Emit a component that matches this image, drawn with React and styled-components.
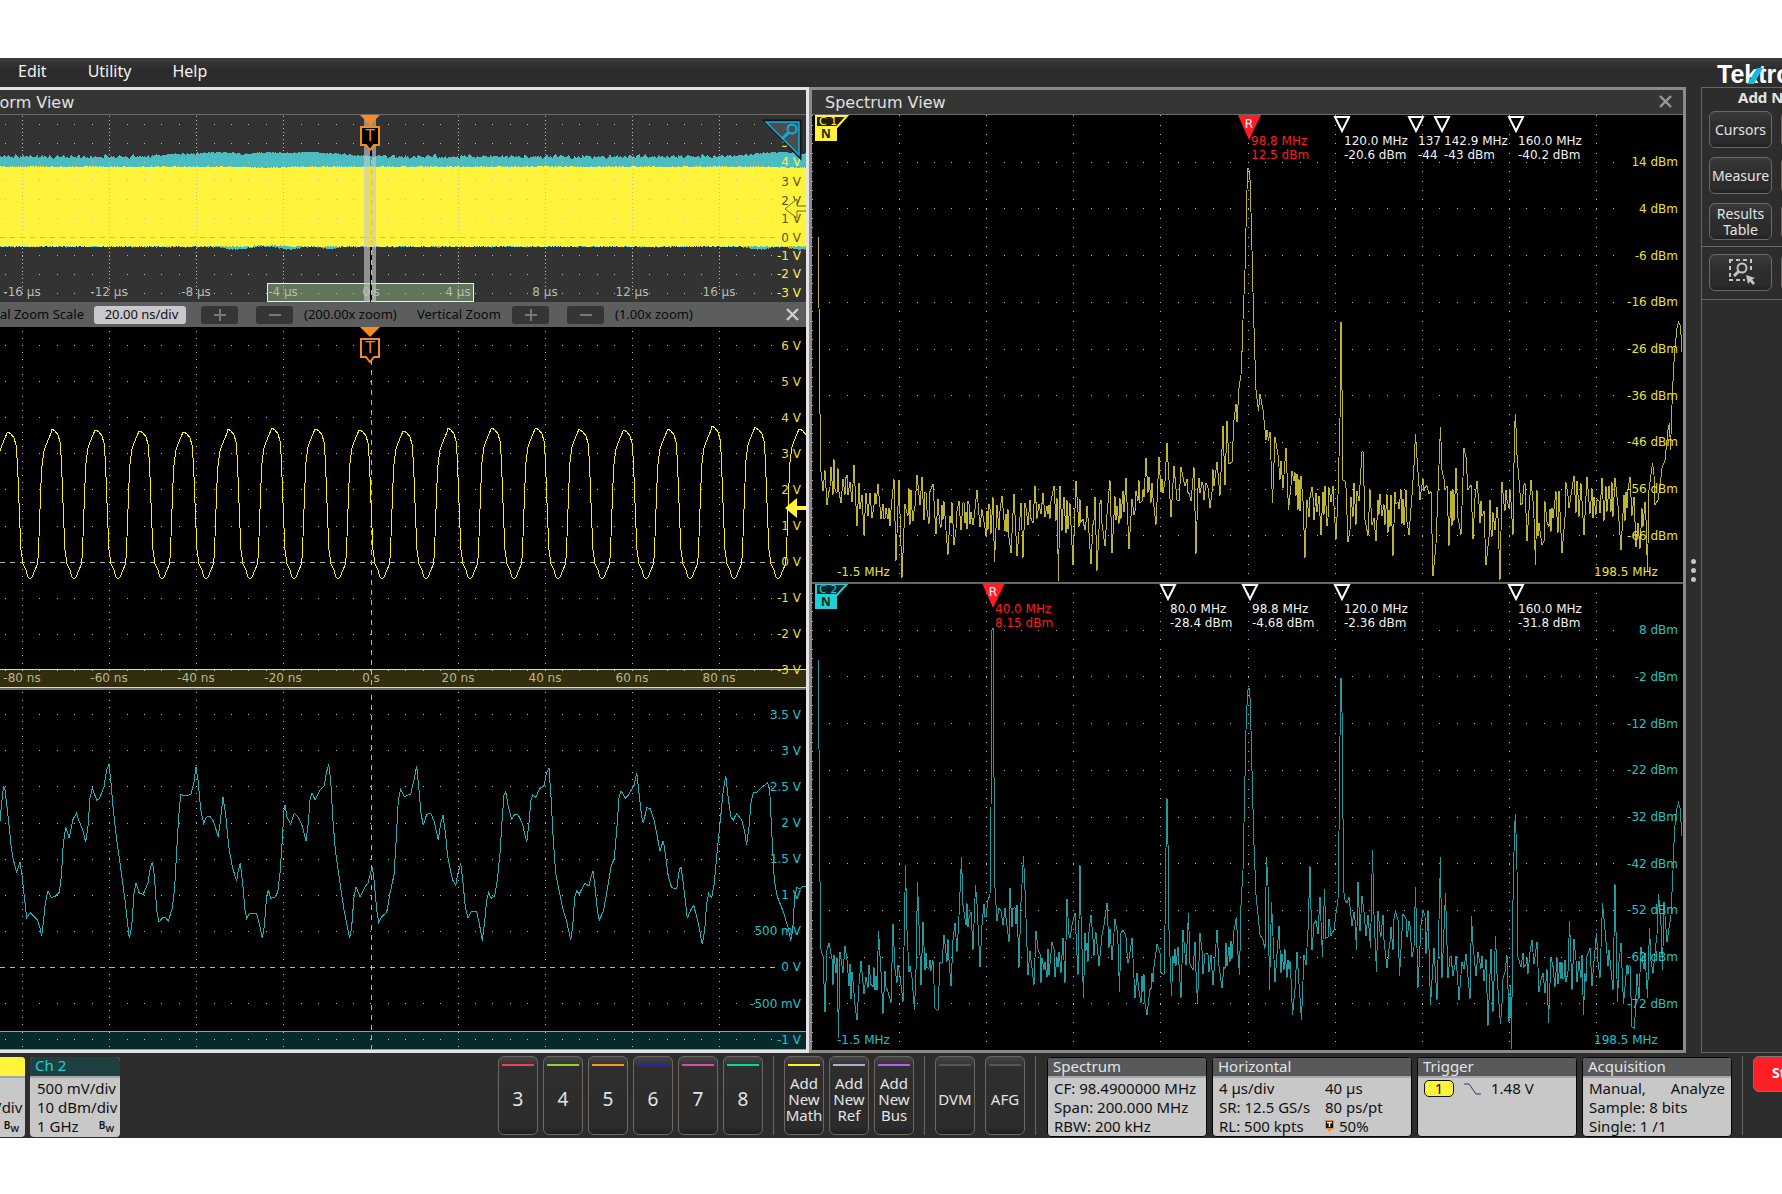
import React, { useState } from 'react';
import styled, { createGlobalStyle } from 'styled-components';

const YELLOW = '#fff43b';
const CYAN = '#22cfd6';
const ORANGE = '#f78b1f';

const GlobalStyle = createGlobalStyle`
    * { box-sizing: border-box; }
    body {
        margin: 0;
        background: #fff;
        font-family: "Noto Sans", "Open Sans", sans-serif;
        overflow-x: hidden;
    }
    button { font-family: inherit; padding: 0; cursor: pointer; }
`;

const Page = styled.div`
    padding: 58px 0 56px;
    overflow: hidden;
`;

const Scope = styled.main`
    background: #2d2d2d;
    color: #e4e4e4;
`;

const MenuBar = styled.header`
    height: 29px;
    display: flex;
    align-items: flex-start;
    justify-content: space-between;
    background: linear-gradient(#3c3c3c, #2c2c2c 40%);
`;

const Menus = styled.nav`
    display: flex;
    gap: 41px;
    padding: 1px 0 0 18px;
`;

const MenuLink = styled.a`
    color: #f2f2f2;
    font-size: 16px;
    line-height: 24px;
    text-decoration: none;
`;

const Brand = styled.svg`
    width: 65px;
    height: 28px;
    display: block;
`;

const Views = styled.div`
    display: grid;
    grid-template-columns: 809fr 877fr 96px;
`;

const View = styled.section`
    min-width: 0;
    border: 3px solid ${p => p.$edge};
    border-left-width: ${p => (p.$flush ? 0 : 3)}px;
    background: #000;
`;

const ViewTitle = styled.div`
    height: 25px;
    display: flex;
    align-items: center;
    justify-content: space-between;
    padding: 2px 8px 0 10px;
    overflow: hidden;
    background: #353533;
    border-bottom: 1px solid #6b6b6b;
`;

const Title = styled.h2`
    margin: 0;
    margin-left: ${p => (p.$cut ? -60 : 3)}px;
    color: #e0e0e0;
    font: 16px/24px "DejaVu Sans", sans-serif;
    white-space: nowrap;
`;

const CloseButton = styled.button`
    width: 20px;
    height: 20px;
    border: 0;
    background: none;
`;

const Plot = styled.svg`
    display: block;
    width: 100%;
    height: auto;
    background: ${p => p.$back || '#000'};
    font: 12px "DejaVu Sans", sans-serif;
`;

const Divider = styled.div`
    height: 2px;
    background: #666;
`;

const ZoomBar = styled.div`
    height: 25px;
    display: flex;
    align-items: center;
    overflow: hidden;
    background: #5c5e5d;
    color: #0a0a0a;
    font-size: 13px;
    line-height: 18px;
    white-space: nowrap;
`;

const ZoomLabel = styled.label`
    width: 84px;
    display: flex;
    justify-content: flex-end;
    padding-bottom: 2px;
`;

const ZoomInput = styled.input`
    width: 92px;
    height: 18px;
    margin: 0 15px 0 10px;
    padding: 0 0 2px 3px;
    border: 0;
    border-radius: 3px;
    background: #c9c9cc;
    color: #111;
    font: 13px/16px "Noto Sans", sans-serif;
    text-align: center;
`;

const ZoomStep = styled.button`
    width: 37px;
    height: 18px;
    margin-right: 18px;
    display: flex;
    align-items: center;
    justify-content: center;
    border: 0;
    border-radius: 3px;
    background: #353535;
`;

const ZoomFactor = styled.span`
    width: 113px;
    margin-left: -7px;
    padding-bottom: 2px;
`;

const ZoomCaption = styled.span`
    width: 95px;
    padding-bottom: 2px;
`;

const ZoomClose = styled(CloseButton)`
    margin: 2px 4px 0 auto;
`;

const SideColumn = styled.aside`
    display: grid;
    grid-template-columns: 15px 81px;
`;

const DragHandle = styled.div`
    display: flex;
    flex-direction: column;
    align-items: center;
    justify-content: center;
    gap: 4px;
`;

const HandleDot = styled.span`
    width: 5px;
    height: 5px;
    border-radius: 50%;
    background: #c4c4c4;
`;

const SidePanel = styled.div`
    overflow: hidden;
    border: 1px solid #6d6763;
    border-right: 0;
`;

const SideTitle = styled.h3`
    width: 150px;
    margin: 0;
    padding: 0 0 5px 36px;
    font-size: 15px;
    line-height: 18px;
    white-space: nowrap;
`;

const SideGrid = styled.div`
    display: grid;
    grid-template-columns: 63px 63px;
    gap: 9px;
    width: 142px;
    padding: ${p => (p.$tools ? '7px 0 8px 7px' : '0 0 6px 7px')};
    border-bottom: 1px solid #6d6763;
`;

const SideButton = styled.button`
    height: 37px;
    border: 1px solid #6e6762;
    border-radius: 6px;
    background: linear-gradient(#3a3a3a, #2e2e2e 40%, #2b2b2b 85%, #202020);
    color: #e4e4e4;
    font-size: 14px;
    line-height: 16px;
`;

const BottomBar = styled.footer`
    height: 85px;
    display: flex;
    align-items: flex-start;
    justify-content: space-between;
    overflow: hidden;
    padding-top: 3px;
`;

const Group = styled.div`
    display: flex;
    gap: ${p => p.$gap || 5}px;
`;

const ToolGroup = styled(Group)`
    margin-left: auto;
`;

const Separator = styled.span`
    width: 1px;
    height: 79px;
    flex: none;
    margin: 0 ${p => p.$after || 10}px 0 10px;
    background: #6d6763;
`;

const SlotButton = styled.button`
    position: relative;
    width: 40px;
    height: 79px;
    flex: none;
    padding-top: 6px;
    border: 1px solid #6e6762;
    border-radius: 6px;
    background: linear-gradient(#444, #2e2e2e 14%, #2c2c2c 90%, #1f1f1f);
    color: #e4e4e4;
    font-size: ${p => (p.$digit ? 19 : 15)}px;
    line-height: 16px;
    text-align: center;

    &::before {
        content: "";
        position: absolute;
        top: 7px;
        left: 3px;
        right: 3px;
        height: 2px;
        background: ${p => p.$color};
    }
`;

const ButtonText = styled.span`
    display: block;
    margin: 0 -4px;
`;

const Badge = styled.section`
    width: ${p => p.$width}px;
    height: 80px;
    flex: none;
    margin-left: ${p => (p.$cut ? -65 : 0)}px;
    margin-top: 1px;
    overflow: hidden;
    border: ${p => (p.$framed ? '1px solid #050505' : '0')};
    border-radius: 4px;
    background: #c8c8c8;
    color: #111;
    font-size: 15px;
    line-height: 19px;
    white-space: nowrap;
`;

const BadgeTitle = styled.h3`
    height: ${p => (p.$tall ? 21 : 20)}px;
    margin: 0;
    padding-left: 5px;
    border-bottom: 2px solid #a6a6a8;
    background: ${p => p.$back || '#58595b'};
    color: ${p => p.$color || '#e4e4e4'};
    font-size: 15px;
    font-weight: 400;
    line-height: 16px;
`;

const BadgeBody = styled.div`
    padding: 1px 6px 0 ${p => p.$pad || 6}px;
`;

const BadgeRow = styled.div`
    display: flex;
    align-items: center;
    justify-content: ${p => (p.$spread ? 'space-between' : 'flex-start')};
`;

const HorizontalGrid = styled.div`
    display: grid;
    grid-template-columns: 106px 1fr;
`;

const Bandwidth = styled.span`
    font-size: 10px;
    font-weight: 600;
    line-height: 12px;
    padding-bottom: 4px;
`;

const SubW = styled.sub`
    font-size: 9px;
    line-height: 0;
`;

const SourceTag = styled.span`
    width: 30px;
    height: 17px;
    margin-right: 10px;
    border: 1px solid #111;
    border-radius: 5px;
    background: ${YELLOW};
    line-height: 15px;
    text-align: center;
`;

const SlopeIcon = styled.svg`
    width: 17px;
    height: 12px;
    margin-right: 10px;
`;

const StopButton = styled.button`
    width: 90px;
    height: 36px;
    flex: none;
    margin-right: -61px;
    padding: 0 0 4px 18px;
    border: 1px solid #777;
    border-radius: 6px;
    background: #ff2026;
    color: #fff;
    font-size: 14px;
    font-weight: 700;
    text-align: left;
`;

/* ---------- trace data ---------- */

// small repeatable generator so the noise floor is the same on every paint
function makeRandom(seed) {
    let s = seed;
    return () => {
        s = (s * 1664525 + 1013904223) % 4294967296;
        return s / 4294967296;
    };
}

const toPath = pts => 'M' + pts.map(p => p[0].toFixed(1) + ' ' + p[1].toFixed(1)).join('L');

// floor: [x, top, bottom] envelope, peaks: [x, y] fixed samples
function spectrumPath(floor, peaks, seed) {
    const rnd = makeRandom(seed);
    const pts = peaks.slice();
    let up = true;
    let k = 0;
    for (let x = floor[0][0]; x < floor[floor.length - 1][0]; x += rnd() < 0.6 ? 1 : 2) {
        while (floor[k + 1][0] < x) k++;
        const [x0, t0, b0] = floor[k];
        const [x1, t1, b1] = floor[k + 1];
        const f = (x - x0) / (x1 - x0);
        const top = t0 + (t1 - t0) * f;
        const bottom = b0 + (b1 - b0) * f;
        const mid = (top + bottom) / 2;
        const reach = (0.1 + rnd() * 0.95) * (bottom - top) / 2;
        up = rnd() < 0.75 ? !up : up;
        const y = up ? mid - reach : mid + reach;
        if (!peaks.some(p => Math.abs(p[0] - x) < 1.2)) pts.push([x, y]);
    }
    return toPath(pts.sort((a, b) => a[0] - b[0]));
}

const floor1 = [
    [821, 465, 490], [830, 458, 495], [840, 463, 500], [850, 475, 500], [860, 480, 520],
    [870, 488, 518], [880, 500, 528], [890, 500, 530], [900, 485, 525], [915, 492, 525],
    [930, 492, 525], [945, 498, 530], [960, 500, 530], [975, 498, 528], [990, 505, 538],
    [1010, 505, 540], [1025, 494, 530], [1040, 494, 522], [1055, 494, 530], [1070, 500, 535],
    [1085, 498, 530], [1100, 490, 530], [1115, 495, 525], [1130, 488, 520], [1145, 476, 505],
    [1160, 470, 500], [1175, 475, 500], [1190, 478, 505], [1205, 474, 500], [1218, 462, 490],
    [1290, 450, 485], [1300, 475, 515], [1310, 485, 525], [1325, 480, 530], [1336, 478, 510],
    [1350, 482, 530], [1370, 488, 540], [1380, 480, 525], [1390, 485, 545], [1400, 485, 525],
    [1412, 480, 525], [1422, 470, 490], [1431, 475, 495], [1447, 478, 492], [1453, 490, 540],
    [1462, 465, 510], [1470, 480, 520], [1480, 490, 535], [1490, 495, 545], [1505, 490, 520],
    [1518, 482, 500], [1530, 485, 540], [1545, 490, 545], [1555, 490, 535], [1570, 480, 518],
    [1580, 480, 528], [1590, 485, 515], [1605, 488, 528], [1615, 480, 525], [1630, 480, 520],
    [1640, 492, 545], [1648, 475, 530], [1658, 470, 500], [1664, 455, 480],
];
const peaks1 = [
    [818, 236], [818.5, 255], [819.5, 360], [820.5, 467], [827, 505], [841, 503], [854, 465],
    [857, 526], [864, 535], [878, 484], [894, 479], [896, 561], [899, 480], [902, 578],
    [917, 475], [922, 477], [933, 484], [936, 534], [948, 555], [954, 545], [977, 490],
    [993, 497], [994.5, 562], [1002, 496], [1011, 553], [1014, 494], [1017, 556], [1023, 558],
    [1035, 486], [1054, 486], [1058.5, 581], [1060, 486], [1073, 565], [1076, 481], [1091, 564],
    [1097, 571], [1105, 546], [1110, 480], [1112, 553], [1126, 478], [1129, 549], [1146, 458],
    [1156, 525], [1159, 457], [1167, 443], [1171, 517], [1174, 466], [1181, 467], [1194, 467],
    [1196, 554], [1210, 508], [1217, 462], [1220, 496], [1223, 426], [1225, 485], [1227, 421],
    [1229, 464], [1232, 462], [1234, 420], [1236, 404], [1237, 422], [1239, 388], [1241, 375],
    [1242, 352], [1243, 320], [1245, 270], [1246, 228], [1247, 190], [1248, 168], [1249, 170],
    [1250, 180], [1251, 212], [1252, 250], [1253, 292], [1254.5, 345], [1256, 390], [1258.5, 411],
    [1260, 394], [1263, 410], [1266, 440], [1267, 430], [1268.5, 441], [1270, 432], [1272.5, 503],
    [1275, 437], [1278, 455], [1283, 488], [1286, 448], [1288.5, 510], [1305, 558], [1321, 535],
    [1336, 540], [1338, 495], [1340, 419], [1341, 322], [1342, 390], [1343, 480], [1348, 542],
    [1362, 452], [1363, 451], [1365, 520], [1376, 541], [1393, 556], [1409, 535], [1412, 495],
    [1414, 465], [1415.5, 434], [1417, 458], [1420, 500], [1433, 576], [1436, 544], [1439, 465],
    [1440.5, 427], [1442, 470], [1449, 546], [1456, 468], [1461, 535], [1464, 448], [1466, 457],
    [1468, 490], [1473, 539], [1477, 481], [1486, 565], [1500, 580], [1502, 482], [1513, 535],
    [1514.5, 428], [1515.5, 414], [1517, 455], [1519, 480], [1527, 541], [1531, 480], [1535.5, 565],
    [1542, 545], [1562, 553], [1574, 476], [1584, 535], [1587, 477], [1602, 478], [1615, 478],
    [1621, 550], [1630, 477], [1636, 547], [1640, 549], [1647.5, 572], [1649, 490], [1652.5, 463],
    [1658, 500], [1662, 468], [1665, 460], [1668, 430], [1669.5, 423], [1670.5, 450], [1672, 405],
    [1673.5, 370], [1675, 348], [1677, 328], [1678.5, 322], [1680.5, 326], [1682, 352],
];

const floor2 = [
    [821, 945, 980], [830, 950, 990], [845, 952, 985], [853, 965, 1010], [860, 970, 1010],
    [870, 965, 995], [885, 960, 995], [900, 955, 980], [915, 950, 985], [930, 955, 968],
    [937, 958, 990], [945, 938, 965], [955, 925, 960], [964, 900, 925], [978, 905, 935],
    [988, 900, 925], [998, 905, 930], [1010, 900, 930], [1023, 900, 925], [1030, 940, 970],
    [1040, 950, 985], [1055, 945, 980], [1070, 925, 965], [1085, 925, 965], [1100, 935, 965],
    [1115, 922, 955], [1130, 935, 965], [1137, 970, 1000], [1147, 975, 1005], [1157, 948, 975],
    [1172, 950, 965], [1185, 940, 980], [1205, 945, 980], [1220, 945, 975], [1234, 935, 960],
    [1260, 925, 940], [1275, 940, 975], [1285, 945, 975], [1298, 955, 1000], [1305, 935, 970],
    [1315, 915, 945], [1330, 915, 940], [1347, 900, 920], [1360, 905, 935], [1375, 910, 945],
    [1390, 915, 955], [1400, 915, 945], [1415, 925, 955], [1425, 915, 950], [1435, 950, 990],
    [1450, 955, 980], [1465, 955, 980], [1480, 955, 975], [1490, 960, 1000], [1500, 960, 1010],
    [1510, 975, 1015], [1519, 952, 965], [1530, 952, 975], [1540, 960, 990], [1550, 965, 1005],
    [1560, 955, 985], [1575, 950, 980], [1590, 955, 990], [1600, 945, 970], [1615, 945, 965],
    [1627, 955, 980], [1638, 965, 1010], [1645, 950, 970], [1655, 930, 955], [1665, 915, 940],
];
const peaks2 = [
    [818, 659], [818.5, 680], [819.5, 815], [820.5, 948], [825, 1012], [827, 950], [829, 943],
    [838.5, 1038], [840, 952], [845, 946], [857, 1020], [861, 961], [878.5, 931], [883, 1014],
    [891, 1003], [893, 924], [903, 1002], [905.5, 865], [907, 930], [914.5, 1010], [917.5, 882],
    [919, 925], [921, 985], [923, 922], [935, 1008], [938, 1011], [944, 935], [951, 986],
    [955, 923], [959, 916], [961.5, 857], [963, 905], [973, 950], [975.5, 885], [980, 967],
    [988, 900], [990, 895], [991, 809], [992, 630], [993, 628], [994, 777], [995, 888],
    [1009, 942], [1010, 888], [1019, 968], [1021, 902], [1023.5, 856], [1025, 890], [1028, 975],
    [1034, 985], [1036, 931], [1052, 942], [1065, 983], [1067, 899], [1072, 925], [1075, 913],
    [1078, 975], [1080, 865], [1081, 915], [1083.5, 998], [1091, 915], [1099, 966], [1104, 925],
    [1107, 903], [1112, 960], [1115, 919], [1119.5, 992], [1123, 930], [1132, 938], [1135, 998],
    [1147, 1015], [1157, 944], [1164, 975], [1165.5, 900], [1166.5, 798], [1167.5, 800], [1169, 930],
    [1171.5, 996], [1181, 998], [1183, 930], [1186, 965], [1188.5, 913], [1193, 970], [1197.5, 1004],
    [1200, 933], [1213, 985], [1217, 930], [1222, 988], [1234, 930], [1236.5, 917], [1239.5, 975],
    [1241, 905], [1243, 870], [1244.5, 800], [1246, 730], [1247, 705], [1248, 690], [1249, 688],
    [1250, 698], [1251, 730], [1252.5, 790], [1254, 845], [1256, 895], [1258, 915], [1263, 940],
    [1266.5, 857], [1268, 885], [1269.5, 990], [1271.5, 902], [1275, 982], [1279, 926], [1292.5, 1015],
    [1297, 952], [1301.5, 1020], [1304, 955], [1308, 930], [1310, 866], [1312, 950], [1320, 897],
    [1322.5, 957], [1324.5, 889], [1334, 930], [1338, 900], [1339.5, 797], [1340.5, 678], [1341.5, 678],
    [1342.5, 745], [1343.5, 890], [1345, 900], [1349, 897], [1356.5, 950], [1358, 882], [1362, 896],
    [1370.5, 948], [1372.5, 850], [1374, 915], [1376.5, 972], [1387, 968], [1395.5, 912], [1399.5, 976],
    [1403, 914], [1412, 957], [1415.5, 887], [1418, 988], [1423, 910], [1428, 910], [1430.5, 1005],
    [1434, 948], [1437, 1000], [1439.5, 900], [1440.5, 857], [1442, 978], [1445.5, 893], [1448, 978],
    [1459, 1000], [1466, 954], [1470, 999], [1471.5, 916], [1473, 945], [1478, 952], [1488, 1026],
    [1491, 949], [1493, 1012], [1495.5, 936], [1500.5, 1024], [1507, 955], [1509, 1022], [1510.5, 985],
    [1511.5, 1049], [1513, 900], [1514.5, 828], [1515.5, 814], [1517, 870], [1518, 957], [1532, 940],
    [1537, 942], [1539, 992], [1548.5, 1023], [1551, 957], [1569.5, 921], [1572, 990], [1574, 939],
    [1583.5, 1015], [1590, 948], [1596.5, 933], [1600, 978], [1602.5, 903], [1605, 930], [1613, 990],
    [1615, 884], [1617.5, 1002], [1621, 943], [1623.5, 1004], [1632, 1027], [1634.5, 1028], [1641, 947],
    [1647.5, 998], [1649.5, 928], [1653, 973], [1658.5, 894], [1662.5, 970], [1664, 902], [1667, 942],
    [1671, 915], [1673, 870], [1674.5, 830], [1676.5, 810], [1678.5, 803], [1680, 808], [1682, 836],
];

// one period of the 87 MHz tone as [dx, y], peak to peak
const tone = [
    [0, 429], [3, 431], [6, 435], [8, 442], [9, 455], [10, 477], [11, 503], [12, 528], [13, 550],
    [15, 564], [18, 570], [20, 577], [22, 579], [24, 577], [27, 570], [29, 565], [30, 558],
    [31, 537], [32, 510], [33, 483], [34, 463], [36, 448], [38, 442], [41, 435], [43, 430],
];
const tonePeaks = [432, 429, 430, 431, 432, 429, 428, 429, 430, 431, 428, 428, 428, 430, 430, 429, 426, 428, 429];

const tonePath = toPath(
    [-1].concat(tonePeaks.map((_, i) => i)).flatMap(i =>
        tone.map(([dx, y]) => {
            const lift = (tonePeaks[Math.max(i, 0)] - 429) * (y < 470 ? 1 : 0);
            return [8 + i * 44 + dx, y + lift];
        })
    )
);

// sampled in thirds of a pixel
const harmonicsA = [
    0,392,6,330,11,287,15,300,25,385,33,465,40,510,50,547,60,517,66,555,73,620,80,683,90,668,100,677,
    112,690,120,715,125,737,130,700,136,640,144,602,153,622,165,620,178,607,184,560,190,460,197,412,
    208,445,218,390,229,370,240,400,248,420,257,457,264,410,270,325,277,295,290,330,298,327,312,290,
    320,240,327,223,333,280,340,360,350,450,360,520,375,630,388,745,395,710,402,610,408,580,418,610,
    430,613,444,578,451,535,457,515,463,555,470,660,477,697,487,684,497,683,505,693,517,655,524,590,
    530,480,536,380,542,314,558,318,573,313,582,275,588,232,594,270,602,360,611,400,619,382,630,379,
    640,393,655,440,662,385,669,320,677,375,686,470,698,535,710,574,715,540,721,520,728,580,735,660,
    740,685,748,670,770,672,780,710,787,745,793,710,799,630,805,600,812,625,825,622,833,607,840,550,
    847,450,852,360,855,344,861,380,872,403,883,370,895,382,905,403,918,452,925,400,930,330,936,308,
    945,330,960,300,972,288,980,245,986,223,992,270,998,380,1006,480,1020,580,1032,660,1049,745,
    1055,710,1062,620,1068,590,1080,620,1095,590,1105,577,1112,545,1117,530,1122,570,1130,660,
    1136,697,1145,680,1160,667,1170,610,1182,555,1188,460,1195,330,1202,298,1213,320,1232,312,
    1242,270,1250,228,1256,290,1263,370,1270,405,1280,373,1292,370,1303,395,1315,450,1322,400,
    1329,376,1336,425,1343,500,1350,535,
];
const harmonicsB = [
    38,600,47,616,54,580,62,550,68,600,76,680,84,715,93,695,110,695,118,730,127,783,134,725,140,660,
    146,637,153,655,164,648,172,600,180,520,187,410,192,345,197,335,205,380,215,418,225,402,235,405,
    247,430,260,487,267,430,273,360,278,345,288,352,298,327,313,316,319,280,327,265,333,350,340,480,
    347,580,358,635,368,685,380,725,392,780,398,740,404,650,410,633,418,642,434,610,447,618,453,590,
    459,574,465,620,472,690,478,720,490,695,500,640,513,560,523,535,530,450,537,355,543,332,556,355,
    565,345,583,315,590,278,597,340,605,410,610,430,620,383,630,385,642,420,660,512,670,482,677,530,
    685,590,695,623,710,627,718,570,723,560,730,610,742,715,752,690,761,676,775,730,787,793,794,750,
    800,670,806,640,815,652,823,610,832,510,842,410,850,330,857,287,863,340,872,410,880,420,890,400,
    905,420,913,450,920,495,927,440,933,370,940,337,948,338,965,322,983,308,989,330,996,470,1003,600,
    1012,650,1030,695,1045,745,1052,783,1058,750,1064,650,1071,622,1079,627,1088,619,1098,620,
];

const pairs = (list, ox, oy) => {
    const out = [];
    for (let i = 0; i < list.length; i += 2) out.push([ox + list[i] / 3, oy + list[i + 1] / 3]);
    return out;
};
const harmonicsPath = toPath(pairs(harmonicsA, 0, 690).concat(pairs(harmonicsB, 440, 680)));

const spectrum1 = spectrumPath(floor1, peaks1, 7);
const spectrum2 = spectrumPath(floor2, peaks2, 21);

function bandPath(topAt, bottomAt, seed) {
    const rnd = makeRandom(seed);
    let top = '';
    let bottom = '';
    for (let x = 0; x <= 806; x++) {
        top += `L${x} ${Math.round(topAt(x, rnd()))}`;
        bottom = `L${x} ${Math.round(bottomAt(x, rnd()))}` + bottom;
    }
    return 'M' + (top + bottom).slice(1) + 'Z';
}
const bump = (x, c, w) => Math.exp(-((x - c) * (x - c)) / (w * w));

const swell = x => Math.min(1, bump(x, 270, 30) + bump(x, 218, 20) + bump(x, 310, 16) + 0.6 * bump(x, 180, 24) + 0.6 * bump(x, 340, 20) + bump(x, 780, 36));
const cyanBand = bandPath(
    (x, r) => {
        const s = swell(x);
        return 155 + (r * 4 - (x % 7 < 3 ? 1 : 0)) * (1 - 0.8 * s) - 3 * s;
    },
    (x, r) => 246 + r * 1.6 + 2.6 * Math.min(1, bump(x, 235, 14) + bump(x, 290, 12) + bump(x, 330, 8) + bump(x, 760, 12) + bump(x, 800, 12)),
    3
);
const yellowBand = bandPath(
    (x, r) => 166 + r * 1.4 + bump(x, 265, 18) + bump(x, 800, 20),
    (x, r) => 246 + (r > 0.5 ? 1 : 0) - bump(x, 270, 20),
    11
);

/* ---------- chart parts ---------- */

const waveCols = [22, 109, 196, 283, 371, 458, 545, 632, 719];
const specCols = [812, 899, 986, 1073, 1160, 1248, 1335, 1422, 1509, 1596];

function Grid({ cols, rows, step, top, bottom, right, left = 0, skipCol, skipRow, color = '#b9b9b9' }) {
    let d = '';
    rows.forEach(y => {
        if (y === skipRow) return;
        for (let x = cols[0] - 17.4; x < right; x += 17.42) {
            if (x >= left) d += `M${Math.round(x)} ${y}h1v1h-1z`;
        }
    });
    cols.forEach(x => {
        if (x === skipCol) return;
        const first = rows[0] - Math.floor((rows[0] - top) / step) * step;
        for (let y = first; y < bottom; y += step) d += `M${x} ${Math.round(y)}h1v1h-1z`;
    });
    return <path d={d} fill={color} shapeRendering="crispEdges" />;
}

function Trace({ d, color }) {
    return <path d={d} fill="none" stroke={color} strokeWidth="1" shapeRendering="crispEdges" />;
}

function ScaleLabels({ items, x, color }) {
    return (
        <g fill={color} textAnchor="end">
            {items.map(([text, y, own]) => (
                <text key={text} x={x} y={y} fill={own || color}>{text}</text>
            ))}
        </g>
    );
}

function TimeLabels({ items, y, color }) {
    return (
        <g fill={color} textAnchor="middle">
            {items.map((text, i) => <text key={text} x={waveCols[i]} y={y}>{text}</text>)}
        </g>
    );
}

function TriggerMark({ y }) {
    return (
        <g transform={`translate(370 ${y})`}>
            <path d="M-10 0H10L0 10Z" fill={ORANGE} />
            <path d="M-9 12H9V30H4L0 35L-4 30H-9Z" fill="#000" stroke={ORANGE} strokeWidth="2" />
            <text y="26" fill={ORANGE} textAnchor="middle" fontSize="15">T</text>
        </g>
    );
}

function PeakMark({ x, top, freq, level, reference }) {
    return (
        <g transform={`translate(${x} ${top})`} fill={reference ? '#ff1c24' : '#f2f2f2'}>
            {reference
                ? <path d="M-11 0H12L0 25Z" />
                : <path d="M-7 2H7L0 16Z" fill="none" stroke="#fff" strokeWidth="2" />}
            {reference && <text y="13" fill="#fff" textAnchor="middle">R</text>}
            <text x="2" y="30">{freq}</text>
            <text x="2" y="44">{level}</text>
        </g>
    );
}

function SourceMark({ top, name, color, dark }) {
    return (
        <g transform={`translate(815 ${top})`}>
            <path d="M1 1H32L22 12H1Z" fill={dark} stroke={color} strokeWidth="2" />
            <text x="4" y="10" fill={color} fontSize="11">{name}</text>
            <rect x="0" y="12" width="22" height="14" fill={color} />
            <text x="11" y="23" fill="#1c2b10" textAnchor="middle" fontWeight="700" fontFamily="Noto Sans">N</text>
        </g>
    );
}

function Cross({ size = 13, color = '#bdbdbd' }) {
    return (
        <svg width={size} height={size} viewBox="0 0 13 13">
            <path d="M1 1L12 12M12 1L1 12" stroke={color} strokeWidth="2.4" />
        </svg>
    );
}

function StepIcon({ plus }) {
    return (
        <svg width="12" height="12" viewBox="0 0 12 12">
            <path d={plus ? 'M0 6H12M6 0V12' : 'M0 6H12'} stroke="#777" strokeWidth="2" />
        </svg>
    );
}

function Overview() {
    return (
        <Plot viewBox="0 115 806 187" $back="#333">
            <path d={cyanBand} fill="#49bdc2" shapeRendering="crispEdges" />
            <path d={yellowBand} fill={YELLOW} shapeRendering="crispEdges" />
            <rect x="267.5" y="283.5" width="206" height="18" fill="#60755a" stroke="#ffff66" />
            <Grid cols={waveCols} rows={[124, 143, 162, 180, 199, 218, 237, 255, 274, 293]} step={3.76}
                top={116} bottom={292} right={776} skipCol={371} skipRow={237} color="#bcbca6" />
            <path d="M0 237.5H780" stroke="#bfbc74" strokeDasharray="5 5" />
            <g shapeRendering="crispEdges">
                <rect x="364" y="115" width="12" height="187" fill="rgba(199,199,199,0.63)" />
                <rect x="370" y="150" width="2" height="152" fill="#000" />
                <rect x="370" y="156" width="2" height="10" fill="#1fb5bb" />
                <rect x="370" y="166" width="2" height="81" fill="#f8e800" />
            </g>
            <path d="M371.5 160V302" stroke="#bbb" strokeDasharray="5 5" />
            <TimeLabels y={296} color="#b8bcb4"
                items={['-16 µs', '-12 µs', '-8 µs', '-4 µs', '0 s', '4 µs', '8 µs', '12 µs', '16 µs']} />
            <ScaleLabels x={801} color="#fff04f"
                items={[
                    ['6 V', 129, '#8f8a3c'], ['5 V', 147], ['4 V', 166], ['3 V', 186, '#57531c'],
                    ['2 V', 205, '#57531c'], ['1 V', 223, '#57531c'], ['0 V', 242, '#57531c'],
                    ['-1 V', 260], ['-2 V', 278], ['-3 V', 297],
                ]} />
            <path d="M806 206H797V199L785 209L797 218V211H806" fill={YELLOW} stroke="#6d671c" />
            <path d="M765 121H800V157Z" fill="#4c4c4c" stroke="#111" strokeWidth="3" />
            <path d="M766 122H799V155Z" fill="#4c4c4c" stroke="#0bb0e2" strokeWidth="1.5" />
            <circle cx="792" cy="129" r="4.5" fill="none" stroke="#0bb0e2" strokeWidth="2" />
            <path d="M789 132L782 139" stroke="#0bb0e2" strokeWidth="3" />
            <TriggerMark y={115} />
        </Plot>
    );
}

function Channel1() {
    return (
        <Plot viewBox="0 327 806 361">
            <g shapeRendering="crispEdges">
                <rect x="0" y="669" width="806" height="19" fill="#322d0c" />
                <path d="M0 669.5H806M0 687.5H806" stroke="#f5ea36" />
            </g>
            <Grid cols={waveCols} rows={[345, 381, 417, 453, 489, 526, 562, 598, 634, 670]} step={7.22}
                top={328} bottom={669} right={776} skipCol={371} skipRow={562} />
            <path d="M0 562.5H780M371.5 360V687" stroke="#b4b4b4" strokeDasharray="5 5" />
            <TimeLabels y={682} color="#bbb58c"
                items={['-80 ns', '-60 ns', '-40 ns', '-20 ns', '0 s', '20 ns', '40 ns', '60 ns', '80 ns']} />
            <ScaleLabels x={801} color="#e6dc3c"
                items={[
                    ['6 V', 350], ['5 V', 386], ['4 V', 422], ['3 V', 458], ['2 V', 494],
                    ['1 V', 530], ['0 V', 566], ['-1 V', 602], ['-2 V', 638], ['-3 V', 674],
                ]} />
            <Trace d={tonePath} color="#fff200" />
            <path d="M785 508L797 498V506H806V510H797V518Z" fill={YELLOW} />
            <TriggerMark y={327} />
        </Plot>
    );
}

function Channel2() {
    return (
        <Plot viewBox="0 690 806 360">
            <g shapeRendering="crispEdges">
                <rect x="0" y="1031" width="806" height="19" fill="#062a2b" />
                <path d="M0 1031.5H806M0 1049.5H806" stroke={CYAN} />
            </g>
            <Grid cols={waveCols} rows={[714, 750, 786, 823, 859, 895, 931, 967, 1003, 1039]} step={7.22}
                top={692} bottom={1048} right={776} skipCol={371} skipRow={967} />
            <path d="M0 967.5H780M371.5 695V1049" stroke="#b4b4b4" strokeDasharray="5 5" />
            <ScaleLabels x={801} color="#20c3c9"
                items={[
                    ['3.5 V', 719], ['3 V', 755], ['2.5 V', 791], ['2 V', 827], ['1.5 V', 863],
                    ['1 V', 899], ['500 mV', 935], ['0 V', 971], ['-500 mV', 1008], ['-1 V', 1044],
                ]} />
            <Trace d={harmonicsPath} color="#1fb2b8" />
        </Plot>
    );
}

function Spectrum1() {
    return (
        <Plot viewBox="812 115 871 467">
            <Grid cols={specCols} rows={[162, 208, 255, 302, 349, 395, 442, 489, 535]} step={9.34}
                top={115} bottom={580} left={815} right={1618} />
            <Trace d={spectrum1} color="#bdb52c" />
            <ScaleLabels x={1678} color="#eae033"
                items={[
                    ['14 dBm', 166], ['4 dBm', 213], ['-6 dBm', 260], ['-16 dBm', 306], ['-26 dBm', 353],
                    ['-36 dBm', 400], ['-46 dBm', 446], ['-56 dBm', 493], ['-66 dBm', 540],
                ]} />
            <text x="837" y="576" fill="#eae033">-1.5 MHz</text>
            <text x="1594" y="576" fill="#eae033">198.5 MHz</text>
            <SourceMark top={115} name="C 1" color={YELLOW} dark="#1f1d05" />
            <PeakMark reference x={1249} top={115} freq="98.8 MHz" level="12.5 dBm" />
            <PeakMark x={1342} top={115} freq="120.0 MHz" level="-20.6 dBm" />
            <PeakMark x={1416} top={115} freq="137" level="-44" />
            <PeakMark x={1442} top={115} freq="142.9 MHz" level="-43 dBm" />
            <PeakMark x={1516} top={115} freq="160.0 MHz" level="-40.2 dBm" />
        </Plot>
    );
}

function Spectrum2() {
    return (
        <Plot viewBox="812 584 871 466">
            <Grid cols={specCols} rows={[630, 676, 723, 770, 817, 863, 910, 957, 1003]} step={9.34}
                top={590} bottom={1048} left={815} right={1618} />
            <Trace d={spectrum2} color="#1d9da1" />
            <ScaleLabels x={1678} color="#20c3c9"
                items={[
                    ['8 dBm', 634], ['-2 dBm', 681], ['-12 dBm', 728], ['-22 dBm', 774], ['-32 dBm', 821],
                    ['-42 dBm', 868], ['-52 dBm', 914], ['-62 dBm', 961], ['-72 dBm', 1008],
                ]} />
            <text x="837" y="1044" fill="#20c3c9">-1.5 MHz</text>
            <text x="1594" y="1044" fill="#20c3c9">198.5 MHz</text>
            <SourceMark top={583} name="C 2" color={CYAN} dark="#062224" />
            <PeakMark reference x={993} top={583} freq="40.0 MHz" level="8.15 dBm" />
            <PeakMark x={1168} top={583} freq="80.0 MHz" level="-28.4 dBm" />
            <PeakMark x={1250} top={583} freq="98.8 MHz" level="-4.68 dBm" />
            <PeakMark x={1342} top={583} freq="120.0 MHz" level="-2.36 dBm" />
            <PeakMark x={1516} top={583} freq="160.0 MHz" level="-31.8 dBm" />
        </Plot>
    );
}

function ZoomControls() {
    const [scale, setScale] = useState('20.00 ns/div');
    return (
        <ZoomBar>
            <ZoomLabel htmlFor="zoom-scale">Horizontal Zoom Scale</ZoomLabel>
            <ZoomInput id="zoom-scale" value={scale} onChange={e => setScale(e.target.value)} />
            <ZoomStep aria-label="Zoom in horizontally"><StepIcon plus /></ZoomStep>
            <ZoomStep aria-label="Zoom out horizontally"><StepIcon /></ZoomStep>
            <ZoomFactor>(200.00x zoom)</ZoomFactor>
            <ZoomCaption>Vertical Zoom</ZoomCaption>
            <ZoomStep aria-label="Zoom in vertically"><StepIcon plus /></ZoomStep>
            <ZoomStep aria-label="Zoom out vertically"><StepIcon /></ZoomStep>
            <ZoomFactor>(1.00x zoom)</ZoomFactor>
            <ZoomClose aria-label="Close zoom"><Cross color="#d0d0d0" /></ZoomClose>
        </ZoomBar>
    );
}

function ZoomAreaIcon() {
    return (
        <svg width="28" height="28" viewBox="0 0 28 28" fill="none" stroke="#c4c4c4">
            <path d="M2 3H25M2 23H18M3 2V24M24 2V16" strokeWidth="2" strokeDasharray="4 3" />
            <circle cx="15" cy="11" r="4.5" strokeWidth="2" />
            <path d="M12 14L7 19" strokeWidth="3" />
            <path d="M19 18L28 21L25 22.500L28 26L26 28L23 24.500L21 27Z" fill="#c4c4c4" stroke="none" />
        </svg>
    );
}

function SideBar() {
    return (
        <SideColumn>
            <DragHandle><HandleDot /><HandleDot /><HandleDot /></DragHandle>
            <SidePanel>
                <SideTitle>Add New...</SideTitle>
                <SideGrid>
                    <SideButton>Cursors</SideButton>
                    <SideButton aria-label="Callout" />
                    <SideButton>Measure</SideButton>
                    <SideButton aria-label="Search" />
                    <SideButton>Results<br />Table</SideButton>
                    <SideButton aria-label="Plot" />
                </SideGrid>
                <SideGrid $tools>
                    <SideButton aria-label="Zoom area"><ZoomAreaIcon /></SideButton>
                    <SideButton aria-label="More" />
                </SideGrid>
            </SidePanel>
        </SideColumn>
    );
}

const channels = [
    ['3', '#f0405a'], ['4', '#97cf2c'], ['5', '#ff9128'],
    ['6', '#2a25b4'], ['7', '#e24aa0'], ['8', '#00dd96'],
];
const adders = [['Math', '#fff22c'], ['Ref', '#aeb0c8'], ['Bus', '#bf5af5']];

function ChannelBadge({ name, scale, back, color, cut }) {
    return (
        <Badge $width={90} $cut={cut}>
            <BadgeTitle $tall $back={back} $color={color}>{name}</BadgeTitle>
            <BadgeBody $pad={7}>
                <div>{scale}</div>
                <div>10 dBm/div</div>
                <BadgeRow $spread>
                    <span>1 GHz</span>
                    <Bandwidth>B<SubW>W</SubW></Bandwidth>
                </BadgeRow>
            </BadgeBody>
        </Badge>
    );
}

function SettingsBar() {
    return (
        <BottomBar>
            <Group>
                <ChannelBadge cut name="Ch 1" scale="1 V/div" back={YELLOW} color="#111" />
                <ChannelBadge name="Ch 2" scale="500 mV/div" back="#1f4040" color={CYAN} />
            </Group>
            <ToolGroup>
                {channels.map(([name, color]) => (
                    <SlotButton key={name} $digit $color={color}>{name}</SlotButton>
                ))}
            </ToolGroup>
            <Separator />
            <Group>
                {adders.map(([name, color]) => (
                    <SlotButton key={name} $color={color}>
                        <ButtonText>Add<br />New<br />{name}</ButtonText>
                    </SlotButton>
                ))}
            </Group>
            <Separator />
            <Group $gap={10}>
                <SlotButton $color="#555">DVM</SlotButton>
                <SlotButton $color="#555">AFG</SlotButton>
            </Group>
            <Separator $after={11} />
            <Group>
                <Badge $framed $width={160}>
                    <BadgeTitle>Spectrum</BadgeTitle>
                    <BadgeBody>
                        <div>CF: 98.4900000 MHz</div>
                        <div>Span: 200.000 MHz</div>
                        <div>RBW: 200 kHz</div>
                    </BadgeBody>
                </Badge>
                <Badge $framed $width={200}>
                    <BadgeTitle>Horizontal</BadgeTitle>
                    <BadgeBody>
                        <HorizontalGrid>
                            <span>4 µs/div</span>
                            <span>40 µs</span>
                            <span>SR: 12.5 GS/s</span>
                            <span>80 ps/pt</span>
                            <span>RL: 500 kpts</span>
                            <Group $gap={5}>
                                <svg width="9" height="17" viewBox="0 0 9 17">
                                    <path d="M0 3H9V12H7L4.500 15L2 12H0Z" fill={ORANGE} />
                                    <path d="M1 4H8V11H1Z" fill="#111" />
                                    <path d="M2 5.500H7M4.500 5V10" stroke="#fff" strokeWidth="1.500" />
                                </svg>
                                <span>50%</span>
                            </Group>
                        </HorizontalGrid>
                    </BadgeBody>
                </Badge>
                <Badge $framed $width={160}>
                    <BadgeTitle>Trigger</BadgeTitle>
                    <BadgeBody>
                        <BadgeRow>
                            <SourceTag>1</SourceTag>
                            <SlopeIcon viewBox="0 0 17 12">
                                <path d="M0 1H5L12 11H17" fill="none" stroke="#34346c" />
                            </SlopeIcon>
                            <span>1.48 V</span>
                        </BadgeRow>
                    </BadgeBody>
                </Badge>
                <Badge $framed $width={150}>
                    <BadgeTitle>Acquisition</BadgeTitle>
                    <BadgeBody>
                        <BadgeRow $spread><span>Manual,</span><span>Analyze</span></BadgeRow>
                        <div>Sample: 8 bits</div>
                        <div>Single: 1 /1</div>
                    </BadgeBody>
                </Badge>
            </Group>
            <Separator />
            <StopButton>Stopped</StopButton>
        </BottomBar>
    );
}

export default function App() {
    return (
        <>
            <GlobalStyle />
            <Page>
                <Scope>
                    <MenuBar>
                        <Menus>
                            <MenuLink href="#edit">Edit</MenuLink>
                            <MenuLink href="#utility">Utility</MenuLink>
                            <MenuLink href="#help">Help</MenuLink>
                        </Menus>
                        <Brand viewBox="0 0 65 28" aria-label="Tektronix">
                            <text x="0" y="25" fill="#fff" fontFamily="Liberation Sans" fontWeight="700" fontSize="25">Tektronix</text>
                            <path d="M30 26L40 10H46L37 26Z" fill="#14bbe0" />
                        </Brand>
                    </MenuBar>
                    <Views>
                        <View $edge="#e4e4e8" $flush>
                            <ViewTitle><Title $cut>Waveform View</Title></ViewTitle>
                            <Overview />
                            <ZoomControls />
                            <Channel1 />
                            <Divider />
                            <Channel2 />
                        </View>
                        <View $edge="#8d8988">
                            <ViewTitle>
                                <Title>Spectrum View</Title>
                                <CloseButton aria-label="Close Spectrum View"><Cross color="#9a9a9a" /></CloseButton>
                            </ViewTitle>
                            <Spectrum1 />
                            <Divider />
                            <Spectrum2 />
                        </View>
                        <SideBar />
                    </Views>
                    <SettingsBar />
                </Scope>
            </Page>
        </>
    );
}
